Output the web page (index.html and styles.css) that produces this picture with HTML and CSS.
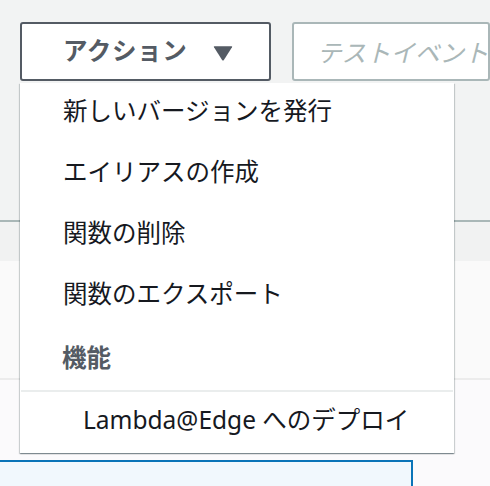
FILE: index.html
```html
<!DOCTYPE html>
<html lang="ja">
<head>
<meta charset="utf-8">
<link rel="stylesheet" href="styles.css">
</head>
<body>
<div class="page">
  <div class="top">
    <div class="toolbar">
      <div class="action-wrap">
        <button class="btn-action"><span class="action-label">アクション</span>
          <svg class="caret" width="20" height="16" viewBox="0 0 20 16"><path d="M1.5 1.2 H18.5 Q19.6 1.2 19 2.2 L10.9 15 Q10 16.2 9.1 15 L1 2.2 Q0.4 1.2 1.5 1.2 Z" fill="#545b64"/></svg>
        </button>
        <div class="menu">
          <div class="item">新しいバージョンを発行</div>
          <div class="item">エイリアスの作成</div>
          <div class="item">関数の削除</div>
          <div class="item">関数のエクスポート</div>
          <div class="group">機能</div>
          <div class="sep"></div>
          <div class="item sub">Lambda@Edge へのデプロイ</div>
        </div>
      </div>
      <div class="btn-test">テストイベント</div>
    </div>
  </div>
  <div class="rule"></div>
  <div class="band"></div>
  <div class="section"></div>
  <div class="rule2"></div>
  <div class="lower">
    <div class="infobox"></div>
  </div>
</div>
</body>
</html>
```

FILE: styles.css
```css
html, body {
  margin: 0;
  padding: 0;
}
body {
  background: #fbfafc;
  font-family: "Noto Sans", "Noto Sans CJK JP", sans-serif;
  overflow: hidden;
  width: 490px;
  height: 486px;
}
.page {
  width: 490px;
}
.top {
  background: #f2f3f3;
  height: 220px;
}
.toolbar {
  display: flex;
  gap: 21px;
  padding: 22px 0 0 20px;
}
.action-wrap {
  position: relative;
}
.btn-action {
  box-sizing: border-box;
  width: 251px;
  height: 59px;
  border: 2px solid #545b64;
  border-radius: 3px;
  background: #ffffff;
  display: flex;
  align-items: center;
  gap: 26px;
  padding: 0 0 0 41px;
  font-family: "Noto Sans", "Noto Sans CJK JP", sans-serif;
  font-weight: 700;
  font-size: 24.5px;
  color: #545b64;
  line-height: 1;
}
.action-label {
  letter-spacing: 0.6px;
}
.caret {
  display: block;
  margin-top: 2px;
}
.btn-test {
  box-sizing: border-box;
  width: 220px;
  height: 59px;
  border: 2px solid #aab7b8;
  border-radius: 3px;
  background: #ffffff;
  display: flex;
  align-items: center;
  padding-left: 23px;
  font-size: 24.5px;
  font-style: italic;
  color: #aab7b8;
  white-space: nowrap;
  overflow: hidden;
}
.menu {
  position: absolute;
  top: 61px;
  left: 0;
  width: 434px;
  background: #ffffff;
  box-shadow: 0 1px 1px 0 rgba(0, 28, 36, 0.3), 1px 1px 1px 0 rgba(0, 28, 36, 0.15), -1px 1px 1px 0 rgba(0, 28, 36, 0.15);
  z-index: 10;
}
.item {
  height: 61px;
  line-height: 56px;
  padding-left: 43px;
  font-size: 24.5px;
  color: #16191f;
  white-space: nowrap;
}
.item.sub {
  padding-left: 63px;
}
.group {
  height: 63px;
  box-sizing: border-box;
  padding: 3px 0 4px 42px;
  line-height: 56px;
  font-size: 24.5px;
  font-weight: 700;
  color: #545b64;
}
.sep {
  height: 2px;
  margin: 0 1px;
  background: #eaeded;
}
.rule {
  height: 2px;
  background: #a9b7b7;
}
.band {
  height: 39px;
  background: #f1f2f2;
}
.section {
  height: 117px;
  background: #fafafa;
}
.rule2 {
  height: 2px;
  background: #ececec;
}
.lower {
  padding-top: 80px;
}
.infobox {
  box-sizing: border-box;
  margin-left: -4px;
  width: 417px;
  height: 40px;
  border: 2px solid #0a74b8;
  background: #f1f8fd;
}
```
